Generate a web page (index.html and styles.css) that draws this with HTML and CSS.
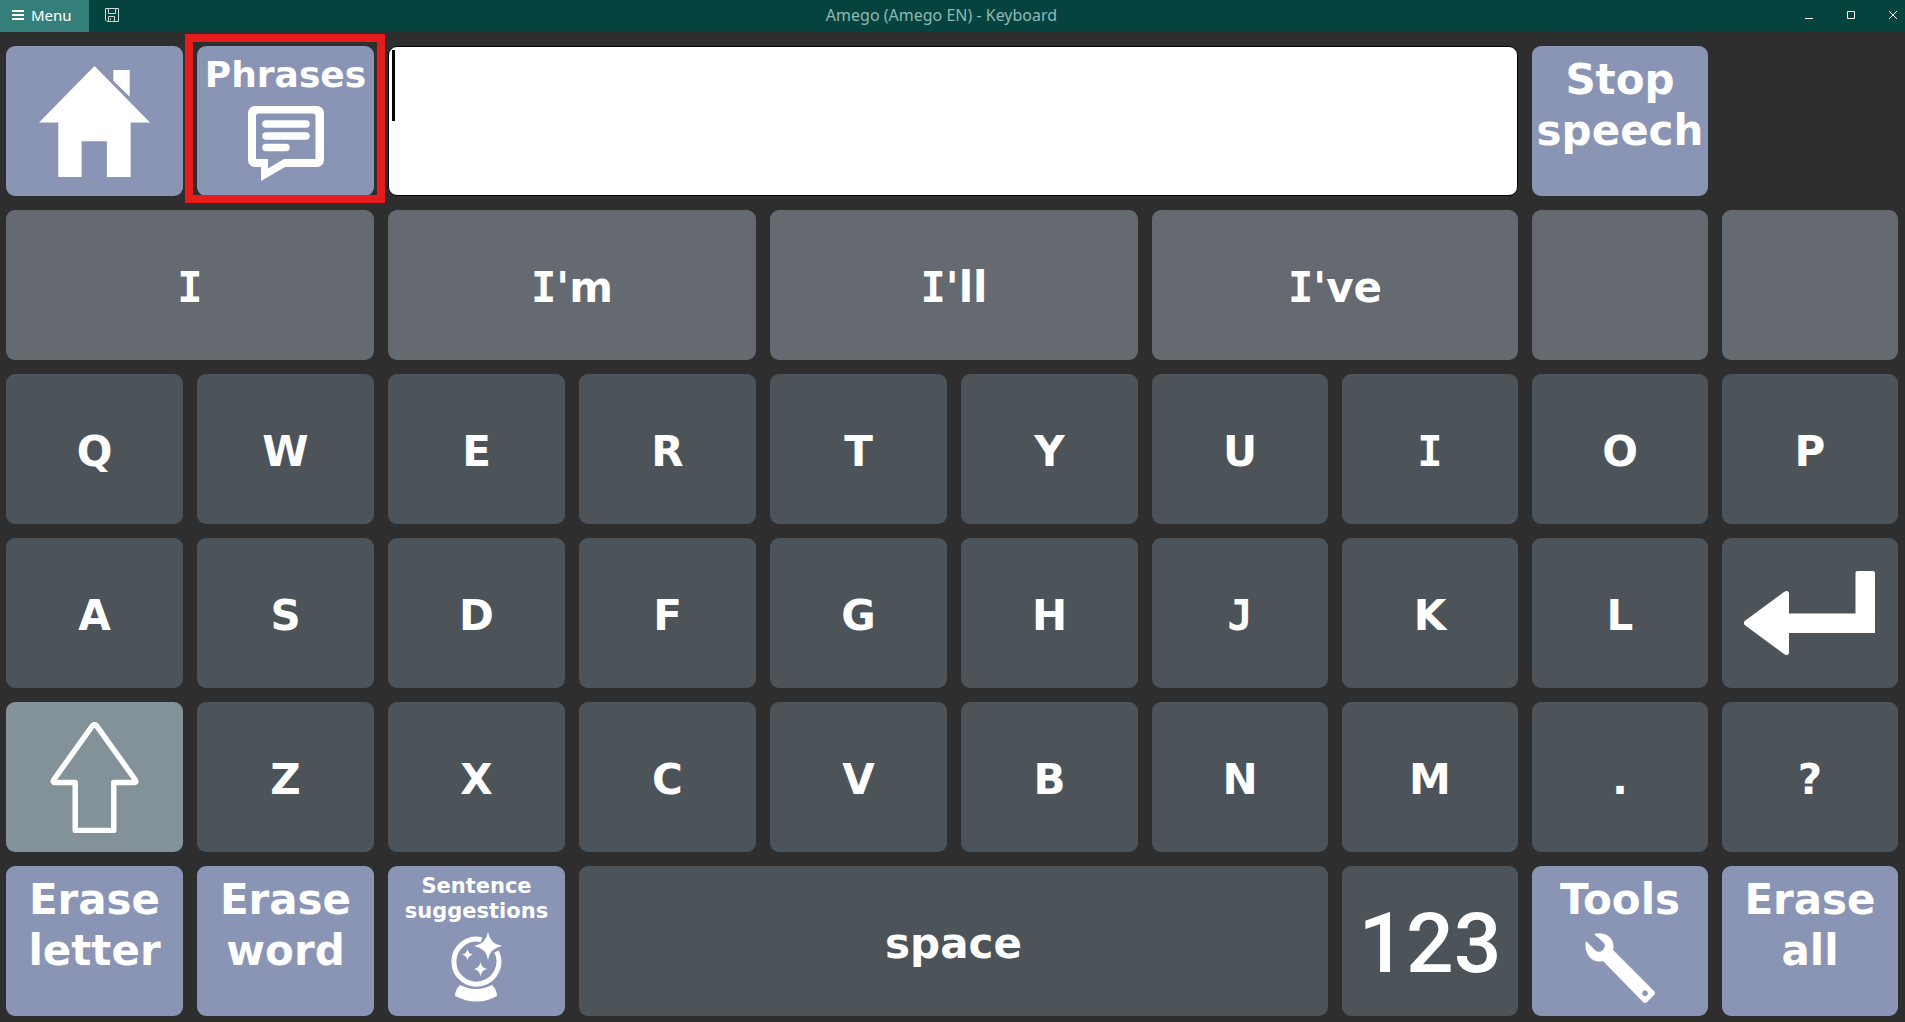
FILE: index.html
```html
<!DOCTYPE html>
<html lang="en">
<head>
<meta charset="utf-8">
<title>Amego (Amego EN) - Keyboard</title>
<link rel="stylesheet" href="styles.css">
</head>
<body>
<header class="titlebar">
  <button class="menu-button" type="button">
    <svg class="menu-icon" width="12" height="10" viewBox="0 0 12 10" aria-hidden="true"><path d="M0 0h12v2H0zM0 4h12v2H0zM0 8h12v2H0z" fill="#fff"/></svg>
    Menu
  </button>
  <button class="save-button" type="button" aria-label="Save">
    <svg width="14" height="14" viewBox="0 0 14 14" fill="none" stroke="#c9dad8" aria-hidden="true"><path d="M.5.5h13v13H2l-1.500-1.500zM3.500.5v5h7v-5M3.500 13.500v-5h6v5M5.500 10.500v1.500"/></svg>
  </button>
  <h1 class="window-title">Amego (Amego EN) - Keyboard</h1>
  <div class="window-controls">
    <button type="button" aria-label="Minimize"><svg width="8" height="8" viewBox="0 0 8 8"><path d="M0 7h8v1H0z" fill="#fff"/></svg></button>
    <button type="button" aria-label="Maximize"><svg width="8" height="8" viewBox="0 0 8 8"><path d="M.5.5h7v7h-7z" fill="none" stroke="#fff"/></svg></button>
    <button type="button" aria-label="Close"><svg width="8" height="8" viewBox="0 0 8 8"><path d="M0 0l8 8M8 0L0 8" stroke="#fff"/></svg></button>
  </div>
</header>
<main class="board">
  <button class="key action icon-only" type="button" aria-label="Home">
    <svg width="111" height="111" viewBox="0 0 112 112" fill="#fff" aria-hidden="true"><path d="M56 0l56 57H92.500v55H68.500V76H43v36H19.500V57H0zM75 4h16.500v27L75 15z"/></svg>
  </button>
  <div class="highlighted">
    <button class="key action" type="button">
      <span class="label-medium">Phrases</span>
      <svg width="76" height="76" viewBox="0 0 76 76" aria-hidden="true"><path fill="#fff" fill-rule="evenodd" d="M7 0h62a7 7 0 0 1 7 7v47a7 7 0 0 1-7 7H37L13 75V61H7a7 7 0 0 1-7-7V7a7 7 0 0 1 7-7zM11 7.500a3 3 0 0 0-3 3v42.500h12v9.500L36 53h31.500V10.500a3 3 0 0 0-3-3z"/><path d="M18 18h40M18 30h40M18 41.500h20" stroke="#fff" stroke-width="7.500" stroke-linecap="round"/></svg>
    </button>
    <span class="highlight-frame"></span>
  </div>
  <div class="message">
    <textarea class="message-input" aria-label="Message"></textarea>
    <span class="caret"></span>
  </div>
  <button class="key action" type="button"><span class="label-large">Stop<br>speech</span></button>
  <span></span>

  <button class="key letter word" type="button"><span><span class="barred">I</span></span></button>
  <button class="key letter word" type="button"><span><span class="barred">I</span>'m</span></button>
  <button class="key letter word" type="button"><span><span class="barred">I</span>'ll</span></button>
  <button class="key letter word" type="button"><span><span class="barred">I</span>'ve</span></button>
  <button class="key blank" type="button" aria-label="Empty suggestion"></button>
  <button class="key blank" type="button" aria-label="Empty suggestion"></button>

  <button class="key letter" type="button">Q</button>
  <button class="key letter" type="button">W</button>
  <button class="key letter" type="button">E</button>
  <button class="key letter" type="button">R</button>
  <button class="key letter" type="button">T</button>
  <button class="key letter" type="button">Y</button>
  <button class="key letter" type="button">U</button>
  <button class="key letter" type="button"><span class="barred">I</span></button>
  <button class="key letter" type="button">O</button>
  <button class="key letter" type="button">P</button>

  <button class="key letter" type="button">A</button>
  <button class="key letter" type="button">S</button>
  <button class="key letter" type="button">D</button>
  <button class="key letter" type="button">F</button>
  <button class="key letter" type="button">G</button>
  <button class="key letter" type="button">H</button>
  <button class="key letter" type="button"><span class="barred">J</span></button>
  <button class="key letter" type="button">K</button>
  <button class="key letter" type="button">L</button>
  <button class="key" type="button" aria-label="Enter">
    <svg width="132" height="84" viewBox="0 0 132 84" fill="#fff" aria-hidden="true"><path d="M114 0h15a2 2 0 0 1 2 2v60H45v19c0 3-2 4-5 2L2 55c-3-2-3-4 0-6L40 21c3-2 5-1 5 2v19.500h66.500V2a2 2 0 0 1 2-2z"/></svg>
  </button>

  <button class="key shift" type="button" aria-label="Shift">
    <svg width="89" height="111" viewBox="0 0 90 112" fill="none" stroke="#fff" stroke-width="5.500" stroke-linejoin="round" aria-hidden="true"><path d="M43 3.500q2-1.500 4 0L86 58q2 3-1 3H64.500v48.500H25.500V61H5q-3 0-1-3z"/></svg>
  </button>
  <button class="key letter" type="button">Z</button>
  <button class="key letter" type="button">X</button>
  <button class="key letter" type="button">C</button>
  <button class="key letter" type="button">V</button>
  <button class="key letter" type="button">B</button>
  <button class="key letter" type="button">N</button>
  <button class="key letter" type="button">M</button>
  <button class="key letter" type="button">.</button>
  <button class="key letter" type="button">?</button>

  <button class="key action" type="button"><span class="label-large">Erase<br>letter</span></button>
  <button class="key action" type="button"><span class="label-large">Erase<br>word</span></button>
  <button class="key action" type="button">
    <span class="label-small">Sentence<br>suggestions</span>
    <svg width="52" height="70" viewBox="0 0 52 70" aria-hidden="true"><path d="M30.500 7.700A22.500 22.500 0 1 0 45.500 19.500" fill="none" stroke="#fff" stroke-width="5"/><path fill="#fff" d="M37 0q2 12 14 14q-12 2-14 14q-2-12-14-14q12-2 14-14zM16.500 17q1 5 5.500 5.500q-4.500 1-5.500 5.500q-1-4.500-5.500-5.500q4.500-.5 5.500-5.500zM29.500 30q1 6 7 7q-6 1-7 7q-1-6-7-7q6-1 7-7zM9 53q16 8 32 0q5 5 5 11q-20 11-42 0q0-6 5-11z"/></svg>
  </button>
  <button class="key letter space" type="button">space</button>
  <button class="key letter digits" type="button">123</button>
  <button class="key action" type="button">
    <span class="label-large">Tools</span>
    <svg width="70" height="70" viewBox="0 0 70 70" fill="#fff" aria-hidden="true"><path fill-rule="evenodd" d="M9 1C20-2 31 5 28 17L69 58q2 2 0 4l-7 7q-2 2-4 0L18 28C8 31-2 21 1 8L11 18q6 3 9-5q0-2-2-4zM60 57.500a2.800 2.800 0 1 0 .1 0z"/></svg>
  </button>
  <button class="key action" type="button"><span class="label-large">Erase<br>all</span></button>
</main>
</body>
</html>
```
FILE: styles.css
```css
* { box-sizing: border-box; }

body {
  margin: 0;
  min-height: 100vh;
  display: flex;
  flex-direction: column;
  background: #2e2e2e;
  color: #fff;
  font-family: "DejaVu Sans", sans-serif;
}

button {
  margin: 0;
  padding: 0;
  border: 0;
  background: none;
  color: inherit;
  font: inherit;
}

svg { display: block; flex: none; }

.titlebar {
  display: grid;
  grid-template-columns: auto 1fr auto 1fr;
  height: 32px;
  background: #05433f;
  font-family: "Noto Sans", sans-serif;
  position: relative;
}

.menu-button {
  display: flex;
  align-items: center;
  gap: 7px;
  width: 89px;
  padding-left: 12px;
  padding-bottom: 2px;
  background: #357f7a;
  font-size: 15px;
}

.save-button {
  justify-self: start;
  display: flex;
  align-items: center;
  padding: 0 16px 2px;
}

.window-title {
  position: absolute;
  left: 0;
  right: 22px;
  margin: 0;
  text-align: center;
  pointer-events: none;
  color: #8fb9b5;
  font-size: 16px;
  font-weight: 400;
  line-height: 30px;
}

.window-controls {
  grid-column: 4;
  justify-self: end;
  display: flex;
  align-items: center;
  gap: 34px;
  padding: 0 8px 2px 0;
}

.board {
  flex: 1;
  display: grid;
  grid-template-columns: repeat(6, minmax(0, 177fr)) repeat(4, minmax(0, 176fr));
  grid-template-rows: repeat(6, minmax(150px, 1fr));
  gap: 14px;
  padding: 14px 7px 6px 6px;
}

.key {
  display: flex;
  align-items: center;
  justify-content: center;
  border-radius: 9px;
  background: #4c5459;
  font-size: 42px;
  font-weight: 700;
  line-height: 51px;
}

.letter { padding-top: 4px; }

.barred { font-family: "DejaVu Sans Mono", monospace; }

.word { grid-column: span 2; }
.word, .blank { background: #656a70; }
.shift { background: #839298; }
.space { grid-column: span 4; }

.digits {
  font-family: Roboto, sans-serif;
  font-size: 84px;
  font-weight: 500;
}

.action {
  flex-direction: column;
  justify-content: flex-start;
  gap: 8px;
  padding-top: 8px;
  background: #8a94b4;
}

.icon-only { justify-content: center; padding-top: 0; }

.label-medium { font-size: 36px; line-height: 42px; padding-bottom: 2px; }
.label-small { font-size: 21px; line-height: 25px; }

.highlighted { position: relative; display: grid; }

.highlight-frame {
  position: absolute;
  inset: -12px -11px -7px -12px;
  border: 8px solid #e61c1c;
  pointer-events: none;
}

.message {
  grid-column: span 6;
  position: relative;
  display: grid;
}

.message-input {
  width: 100%;
  height: 100%;
  padding: 4px;
  border: 1px solid #000;
  border-radius: 9px;
  background: #fff;
  color: #000;
  font: 60px "DejaVu Sans", sans-serif;
  resize: none;
}

.caret {
  position: absolute;
  left: 4px;
  top: 4px;
  width: 3px;
  height: 71px;
  background: #000;
}
```
